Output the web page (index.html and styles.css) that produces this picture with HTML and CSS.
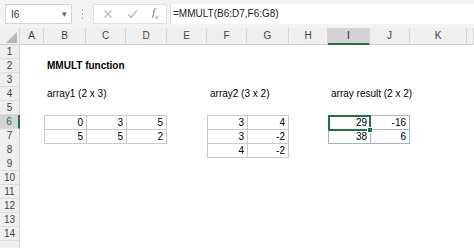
FILE: index.html
```html
<!DOCTYPE html>
<html>
<head>
<meta charset="utf-8">
<link rel="stylesheet" href="styles.css">
</head>
<body>
<div class="app">
  <div class="toolbar">
    <div class="namebox"><span>I6</span><span class="caret">▾</span></div>
    <div class="dots"><i></i><i></i><i></i></div>
    <div class="fxbox">
      <svg class="ic" width="10" height="10" viewBox="0 0 10 10"><path d="M1.5 1.5 L8.5 8.5 M8.5 1.5 L1.5 8.5" stroke="#b9b9b9" stroke-width="1.2" fill="none"/></svg>
      <svg class="ic" width="11" height="10" viewBox="0 0 11 10"><path d="M1 5.5 L4 8.5 L10 1.5" stroke="#b9b9b9" stroke-width="1.2" fill="none"/></svg>
      <span class="fx">f<sub>x</sub></span>
    </div>
    <div class="formula">=MMULT(B6:D7,F6:G8)</div>
  </div>
  <div class="sheet">
    <div class="colhead">
      <div class="corner"><svg width="11" height="11" viewBox="0 0 11 11"><path d="M11 0 L11 11 L0 11 Z" fill="#b7b7b7"/></svg></div>
      <div class="ch">A</div><div class="ch">B</div><div class="ch">C</div><div class="ch">D</div><div class="ch">E</div><div class="ch">F</div><div class="ch">G</div><div class="ch">H</div><div class="ch sel">I</div><div class="ch">J</div><div class="ch">K</div><div class="ch"></div>
    </div>
    <div class="row"><div class="rh">1</div></div>
    <div class="row"><div class="rh">2</div><div></div><div class="c title">MMULT function</div></div>
    <div class="row"><div class="rh">3</div></div>
    <div class="row"><div class="rh">4</div><div></div><div class="c">array1 (2 x 3)</div><div></div><div></div><div></div><div class="c">array2 (3 x 2)</div><div></div><div></div><div class="c">array result (2 x 2)</div></div>
    <div class="row"><div class="rh">5</div></div>
    <div class="row"><div class="rh sel">6</div><div></div><div class="c n g">0</div><div class="c n g">3</div><div class="c n g gr">5</div><div></div><div class="c n g">3</div><div class="c n g gr">4</div><div></div><div class="c n b active">29</div><div class="c n b br">-16</div></div>
    <div class="row"><div class="rh">7</div><div></div><div class="c n g gb">5</div><div class="c n g gb">5</div><div class="c n g gr gb">2</div><div></div><div class="c n g">3</div><div class="c n g gr">-2</div><div></div><div class="c n b bb">38</div><div class="c n b br bb">6</div></div>
    <div class="row"><div class="rh">8</div><div></div><div></div><div></div><div></div><div></div><div class="c n g gb">4</div><div class="c n g gr gb">-2</div></div>
    <div class="row"><div class="rh">9</div></div>
    <div class="row"><div class="rh">10</div></div>
    <div class="row"><div class="rh">11</div></div>
    <div class="row"><div class="rh">12</div></div>
    <div class="row"><div class="rh">13</div></div>
    <div class="row"><div class="rh">14</div></div>
    <div class="row"><div class="rh"></div></div>
  </div>
</div>
</body>
</html>
```
FILE: styles.css
```css
html, body {
  margin: 0;
  padding: 0;
  background: #ffffff;
}
body {
  width: 474px;
  height: 248px;
  overflow: hidden;
  font-family: "Liberation Sans", Arial, sans-serif;
  color: #000;
}
.toolbar {
  height: 28px;
  box-sizing: border-box;
  background: #f3f3f3;
  display: flex;
  align-items: flex-start;
  padding-top: 4px;
}
.namebox {
  margin-left: 5px;
  width: 67px;
  height: 20px;
  box-sizing: border-box;
  background: #fff;
  border: 1px solid #d4d4d4;
  display: flex;
  align-items: center;
  justify-content: space-between;
  padding: 0 4px 0 5px;
  font-size: 10px;
  color: #333;
}
.caret {
  font-size: 9px;
  color: #666;
}
.dots {
  width: 21px;
  height: 20px;
  display: flex;
  flex-direction: column;
  align-items: center;
  justify-content: center;
  gap: 2px;
}
.dots i {
  display: block;
  width: 1px;
  height: 2px;
  background: #b0b0b0;
}
.fxbox {
  width: 74px;
  height: 20px;
  box-sizing: border-box;
  background: #fff;
  border: 1px solid #e0e0e0;
  display: flex;
  align-items: center;
  padding-left: 9px;
  gap: 14px;
}
.fx {
  font-family: "Liberation Serif", serif;
  font-style: italic;
  font-size: 11px;
  color: #777;
}
.fx sub {
  font-size: 7px;
}
.formula {
  margin-left: 3px;
  flex: 1;
  height: 20px;
  box-sizing: border-box;
  background: #fff;
  border-left: 1px solid #e0e0e0;
  font-size: 10px;
  line-height: 19px;
  padding-left: 2px;
  color: #222;
  white-space: nowrap;
}
.colhead, .row {
  display: grid;
  grid-template-columns: 20px 24px 42px 40px 41px 40px 40px 42px 39px 42px 40px 57px 7px;
}
.colhead {
  height: 17px;
  background: #efefef;
  border-bottom: 1px solid #cfcfcf;
  box-sizing: border-box;
}
.corner {
  display: flex;
  align-items: flex-end;
  justify-content: flex-end;
  padding: 0 2px 2px 0;
  border-right: 1px solid #d6d6d6;
}
.ch {
  border-right: 1px solid #d6d6d6;
  font-size: 10px;
  color: #444;
  text-align: center;
  line-height: 16px;
}
.ch.sel {
  background: #d3d3d3;
  border-bottom: 2px solid #217346;
  color: #222;
  line-height: 15px;
}
.row {
  height: 14px;
}
.rh {
  background: #efefef;
  border-right: 1px solid #cfcfcf;
  border-bottom: 1px solid #dcdcdc;
  box-sizing: border-box;
  font-size: 10px;
  color: #444;
  text-align: center;
  line-height: 13px;
}
.rh.sel {
  background: #d3d3d3;
  color: #217346;
  border-right: 2px solid #217346;
}
.c {
  box-sizing: border-box;
  font-size: 10px;
  line-height: 13px;
  white-space: nowrap;
  padding: 0 3px;
  overflow: visible;
}
.title {
  font-weight: bold;
}
.n {
  text-align: right;
}
.g {
  border-top: 1px solid #c9c9c9;
  border-left: 1px solid #c9c9c9;
}
.gr {
  border-right: 1px solid #c9c9c9;
}
.gb {
  border-bottom: 1px solid #c9c9c9;
}
.b {
  border-top: 1px solid #9fb4dc;
  border-left: 1px solid #9fb4dc;
}
.br {
  border-right: 1px solid #9fb4dc;
}
.bb {
  border-bottom: 1px solid #9fb4dc;
}
.active {
  position: relative;
}
.active::after {
  content: "";
  position: absolute;
  left: -1px;
  top: -1px;
  right: -1px;
  bottom: -2px;
  border: 2px solid #217346;
}
.active::before {
  content: "";
  position: absolute;
  right: -3px;
  bottom: -4px;
  width: 4px;
  height: 4px;
  background: #217346;
  border: 1px solid #fff;
  z-index: 2;
}
```
